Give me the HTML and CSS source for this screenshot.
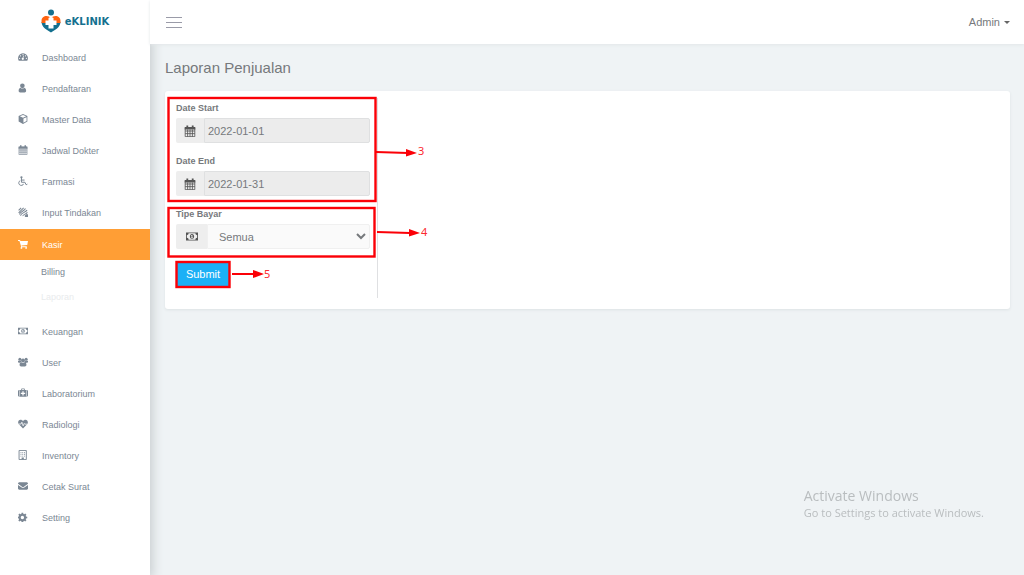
FILE: index.html
```html
<!DOCTYPE html>
<html lang="id">
<head>
    <meta charset="UTF-8">
    <meta name="viewport" content="width=device-width, initial-scale=1.0">
    <title>eKlinik - Laporan Penjualan</title>
    <link rel="stylesheet" href="styles.css">
</head>
<body>
    <aside class="sidebar">
        <a class="logo" href="#">
            <svg viewBox="0 0 40 48" width="20" height="24" aria-hidden="true">
                <circle cx="20" cy="7" r="6" fill="#14708f"/>
                <path d="M1 26 C2 38 12 41 20 47 C28 41 38 38 39 26 Z" fill="#14708f"/>
                <path d="M20 18 C14 11 1 13 1 24 L1 28 L20 28 Z M20 18 C26 11 39 13 39 24 L39 28 L20 28 Z" fill="#ff6410"/>
                <path d="M15 18 Q20 14 25 18 V23 H31 V32 H25 V39 H15 V32 H9 V23 H15 Z" fill="#fff"/>
            </svg>
            <span>eKLINIK</span>
        </a>
        <nav>
            <ul class="menu">
                <li><a href="#">
                    <svg class="icon" viewBox="0 0 16 16"><path fill-rule="evenodd" d="M8 2a8 8 0 0 0-6.8 12h13.6A8 8 0 0 0 8 2zM8 3.200a1 1 0 1 1 0 2 1 1 0 0 1 0-2zM4 5a1 1 0 1 1 0 2 1 1 0 0 1 0-2zM12 5a1 1 0 1 1 0 2 1 1 0 0 1 0-2zM2.600 9a1 1 0 1 1 0 2 1 1 0 0 1 0-2zM13.400 9a1 1 0 1 1 0 2 1 1 0 0 1 0-2zM9.300 6l-.7 3.500a1.700 1.700 0 1 1-1.200-.2L8.400 5.800z"/></svg>
                    Dashboard</a></li>
                <li><a href="#">
                    <svg class="icon" viewBox="0 0 16 16"><circle cx="7" cy="4.500" r="3.700"/><path d="M4 7.500C2 8 1 10 1 12.500 1 14 2 15 3.500 15h7c1.500 0 2.500-1 2.500-2.500 0-2.500-1-4.500-3-5a4.500 4.500 0 0 1-6 0z"/></svg>
                    Pendaftaran</a></li>
                <li><a href="#">
                    <svg class="icon" viewBox="0 0 16 16"><path fill-rule="evenodd" d="M8 0l7 3v9l-7 4-7-4V3zM8 1.500L3 3.700 8 6l5-2.300zM8.700 7.200v6.800l5-2.800V5z"/></svg>
                    Master Data</a></li>
                <li><a href="#">
                    <svg class="icon" viewBox="0 0 16 16"><use href="#calendar"/></svg>
                    Jadwal Dokter</a></li>
                <li><a href="#">
                    <svg class="icon" viewBox="0 0 16 16"><circle cx="5.500" cy="2" r="1.800"/><path d="M5.500 3v7h5.500l2 4 2-1M6 6.500h4.500M3.500 7.500a4 4 0 1 0 5.500 5" fill="none" stroke="currentColor" stroke-width="1.600"/></svg>
                    Farmasi</a></li>
                <li><a href="#">
                    <svg class="icon" viewBox="0 0 16 16"><path d="M1 5.500l4-4M1 9.500L9 1.500M2.500 12C2 8 10 7 12 2.500M4.500 14C3 10 12 9 14.500 5M8 14.500c-1-2.500 5-2.500 7-6M11 14.500l4-3M13 15h2.500v-2z" fill="none" stroke="currentColor" stroke-width="1.700"/></svg>
                    Input Tindakan</a></li>
                <li class="active"><a href="#">
                    <svg class="icon" viewBox="0 0 16 16"><path d="M0 1.500h3.300l.5 1.500H16l-1.200 6.500-9.300 1 .3 1H14V13H4.500l.4-1.500L2.300 3H0z"/><circle cx="5.500" cy="14.200" r="1.400"/><circle cx="13" cy="14.200" r="1.400"/></svg>
                    Kasir</a>
                    <ul class="submenu">
                        <li><a href="#">Billing</a></li>
                        <li><a class="current" href="#">Laporan</a></li>
                    </ul>
                </li>
                <li><a href="#">
                    <svg class="icon" viewBox="0 0 18 16"><use href="#money"/></svg>
                    Keuangan</a></li>
                <li><a href="#">
                    <svg class="icon" viewBox="0 0 16 16"><circle cx="3" cy="3.500" r="2.400"/><circle cx="13" cy="3.500" r="2.400"/><circle cx="8" cy="5.500" r="3.200"/><path d="M0 6h5v3H1.500C.5 9 0 8.500 0 7.500zM16 6h-5v3h3.500c1 0 1.500-.5 1.500-1.500zM5 8c-1.500.5-2.500 2-2.500 4.500 0 1.500 1 2.500 2.500 2.500h6c1.500 0 2.500-1 2.500-2.500 0-2.500-1-4-2.500-4.500a4 4 0 0 1-6 0z"/></svg>
                    User</a></li>
                <li><a href="#">
                    <svg class="icon" viewBox="0 0 16 16"><path fill-rule="evenodd" d="M5 3V1.500L6 .8h4l1 .7V3h3.500L16 4.500v8L14.500 14h-13L0 12.500v-8L1.500 3zM6.200 3h3.600V2H6.200zM7 5v2.500H4.500v2H7V12h2V9.500h2.500v-2H9V5zM2 3.500v10h.8v-10zM13.200 3.500v10h.8v-10z"/></svg>
                    Laboratorium</a></li>
                <li><a href="#">
                    <svg class="icon" viewBox="0 0 16 16"><path d="M8 15L1 8C-1 5 1 1 4 1c2 0 3 1 4 2 1-1 2-2 4-2 3 0 5 4 3 7z"/><path d="M1 8h4l1.200-3 2 6L10 7l.8 1.200H15" fill="none" stroke="#fff" stroke-width="1.200"/></svg>
                    Radiologi</a></li>
                <li><a href="#">
                    <svg class="icon" viewBox="0 0 16 16"><path d="M1.700.7h11.600v14.600H1.700z" fill="none" stroke="currentColor" stroke-width="1.500"/><path d="M4 3h1.500v1.500H4zM6.800 3h1.500v1.500H6.800zM9.600 3h1.500v1.500H9.600zM4 6h1.500v1.500H4zM6.800 6h1.500v1.500H6.800zM9.600 6h1.500v1.500H9.600zM4 9h1.500v1.500H4zM6.800 9h1.500v1.500H6.800zM9.600 9h1.500v1.500H9.600zM5.800 12h3.500v3H5.800z"/></svg>
                    Inventory</a></li>
                <li><a href="#">
                    <svg class="icon" viewBox="0 0 16 16"><path d="M1.500 2h13L16 3.500v1L9 9.500H7L0 4.500v-1zM0 6.200l6.500 4.600h3L16 6.200v6.300L14.500 14h-13L0 12.500z"/></svg>
                    Cetak Surat</a></li>
                <li><a href="#">
                    <svg class="icon" viewBox="0 0 16 16"><path fill-rule="evenodd" d="M5.700 1h2.600l.4 2 1.200.5 1.700-1.200 1.900 1.900-1.200 1.700.5 1.200 2 .4v2.600l-2 .4-.5 1.200 1.200 1.700-1.900 1.900-1.700-1.200-1.200.5-.4 2H5.700l-.4-2-1.200-.5-1.700 1.200L.5 13.400l1.200-1.700-.5-1.200-1.200-.4V7.500l1.200-.4.5-1.200L.5 4.200l1.900-1.900 1.700 1.200L5.300 3zM7 6a2.700 2.700 0 1 0 0 5.400A2.700 2.700 0 0 0 7 6z"/></svg>
                    Setting</a></li>
            </ul>
        </nav>
    </aside>

    <div class="page">
        <header class="topbar">
            <button class="toggle" type="button" aria-label="Menu"><i></i><i></i><i></i></button>
            <a class="account" href="#">Admin <span class="caret"></span></a>
        </header>

        <main class="content">
            <h1>Laporan Penjualan</h1>
            <section class="card">
                <form class="filter">
                    <div class="form-group">
                        <label for="dateStart">Date Start</label>
                        <div class="input-group">
                            <span class="addon"><svg viewBox="0 0 16 16" width="12" height="12"><use href="#calendar"/></svg></span>
                            <input type="text" id="dateStart" value="2022-01-01" readonly>
                        </div>
                    </div>
                    <div class="form-group">
                        <label for="dateEnd">Date End</label>
                        <div class="input-group">
                            <span class="addon"><svg viewBox="0 0 16 16" width="12" height="12"><use href="#calendar"/></svg></span>
                            <input type="text" id="dateEnd" value="2022-01-31" readonly>
                        </div>
                    </div>
                    <div class="form-group">
                        <label for="tipeBayar">Tipe Bayar</label>
                        <div class="input-group">
                            <span class="addon wide"><svg viewBox="0 0 18 16" width="12" height="11"><use href="#money"/></svg></span>
                            <select id="tipeBayar">
                                <option>Semua</option>
                            </select>
                        </div>
                    </div>
                    <button class="submit" type="button">Submit</button>
                </form>

                <!-- penanda langkah 3 - 5 -->
                <svg class="marks" width="270" height="205" viewBox="0 0 270 205">
                    <g fill="none" stroke="#fb0007" stroke-width="2.400">
                        <rect x="3.500" y="7" width="207" height="103"/>
                        <rect x="3.500" y="117" width="206" height="48.500"/>
                        <rect x="11.500" y="171" width="53" height="25"/>
                        <path d="M211 61L243 62M212 141L245 142M67 183H90" stroke-width="2"/>
                    </g>
                    <path d="M241 58L252 62L241 65.500zM244 138L255 142L244 145.500zM88 179L99 183L88 187z" fill="#fb0007"/>
                    <text x="253" y="64">3</text>
                    <text x="256" y="145">4</text>
                    <text x="99" y="187">5</text>
                </svg>
            </section>
        </main>
    </div>

    <div class="watermark">
        <strong>Activate Windows</strong>
        <span>Go to Settings to activate Windows.</span>
    </div>

    <!-- ikon yang dipakai lebih dari sekali -->
    <svg class="defs" width="0" height="0" aria-hidden="true">
        <defs>
            <g id="calendar">
                <path d="M1.600 3.500h12.800v12H1.600zM1.600 8h12.800M1.600 11.500h12.800M4.800 6v9.500M8 6v9.500M11.200 6v9.500" fill="none" stroke="currentColor" stroke-width="1.100"/>
                <path d="M1 2.500h14V6H1zM3.200.500h2.400v4H3.200zM10.400.500h2.400v4h-2.400z"/>
            </g>
            <g id="money">
                <path fill-rule="evenodd" d="M0 2h18v12H0zM4 3.300A2.700 2.700 0 0 1 1.300 6v4A2.700 2.700 0 0 1 4 12.700h10a2.700 2.700 0 0 1 2.700-2.700V6A2.700 2.700 0 0 1 14 3.300zM9 4.200c2 0 3.200 1.700 3.200 3.800S11 11.800 9 11.800 5.800 10.100 5.800 8 7 4.200 9 4.200zM8.500 5.700L7.200 6.800l.6.700.6-.4v2.400h-1v1h3.200v-1h-1V5.700z"/>
            </g>
        </defs>
    </svg>
</body>
</html>
```

FILE: styles.css
```css
* {
    box-sizing: border-box;
}

body {
    margin: 0;
    min-height: 100vh;
    display: flex;
    font-family: "Liberation Sans", Arial, sans-serif;
    font-size: 11px;
    color: #76797c;
    background-color: #eff3f5;
}

a {
    color: inherit;
    text-decoration: none;
}

ul {
    list-style: none;
    margin: 0;
    padding: 0;
}

svg {
    fill: currentColor;
}

/* sidebar */
.sidebar {
    flex: 0 0 150px;
    background-color: #fff;
    box-shadow: 0 0 10px 3px #c9cfd1;
}

.logo {
    display: flex;
    justify-content: center;
    align-items: center;
    gap: 4px;
    height: 42px;
    font: bold 10px "DejaVu Sans", sans-serif;
    color: #14708f;
}

.menu > li > a {
    display: flex;
    align-items: center;
    gap: 14px;
    height: 31px;
    padding-left: 18px;
    font-size: 9px;
    color: #7b8794;
}

.icon {
    width: 10px;
    height: 10px;
    margin-bottom: 2px;
}

.menu > .active {
    margin-top: 1px;
}

.menu > .active > a {
    color: #fff;
    background-color: #ff9e35;
}

.submenu {
    height: 56px;
}

.submenu a {
    display: block;
    padding-left: 41px;
    font-size: 9px;
    line-height: 25px;
    color: #7b8794;
}

.submenu .current {
    color: #e9ebed;
}

/* bagian kanan */
.page {
    flex: 1;
    min-width: 0;
}

.topbar {
    position: relative;
    display: flex;
    justify-content: space-between;
    align-items: center;
    height: 44px;
    padding: 0 14px 0 16px;
    background-color: #fff;
    box-shadow: 0 1px 3px #e2e6e8;
}

.toggle {
    display: flex;
    flex-direction: column;
    gap: 4px;
    width: 16px;
    padding: 0;
    border: 0;
    background: none;
    cursor: pointer;
}

.toggle i {
    height: 1px;
    background-color: #9a9ba8;
}

.account {
    display: flex;
    align-items: center;
    gap: 4px;
}

.caret {
    border: 3px solid transparent;
    border-top-color: #666;
    border-bottom: 0;
}

.content {
    padding: 14px 14px 14px 15px;
}

h1 {
    margin: 0 0 13px;
    font-size: 15px;
    font-weight: normal;
    line-height: 20px;
}

.card {
    position: relative;
    padding: 7px 11px 11px;
    border-radius: 3px;
    background-color: #fff;
    box-shadow: 0 1px 3px #dde2e4;
}

/* form filter */
.filter {
    width: 202px;
    height: 200px;
    padding: 4px 7px 0 0;
    border-right: 1px solid #dfe0e2;
}

.form-group {
    margin-bottom: 12px;
}

.form-group label {
    display: block;
    margin-bottom: 4px;
    font-size: 9px;
    font-weight: bold;
    line-height: 12px;
}

.input-group {
    display: flex;
    height: 25px;
}

.addon {
    flex: 0 0 28px;
    display: flex;
    justify-content: center;
    align-items: center;
    border-radius: 2px 0 0 2px;
    color: #555;
    background-color: #eee;
}

.addon.wide {
    flex-basis: 31px;
}

.input-group input,
.input-group select {
    flex: 1;
    min-width: 0;
    border: 1px solid #dfe0e1;
    border-radius: 0 2px 2px 0;
    font: inherit;
    color: inherit;
}

.input-group input {
    padding: 0 3px;
    background-color: #ececec;
}

.input-group select {
    padding: 0 0 0 7px;
    border-color: #f0f0f0;
    background-color: #fafafa;
}

.submit {
    display: block;
    width: 54px;
    height: 25px;
    padding: 0;
    border: 0;
    font: inherit;
    color: #fff;
    background-color: #1cb0f6;
    cursor: pointer;
}

.marks {
    position: absolute;
    top: 0;
    left: 0;
    pointer-events: none;
}

.marks text {
    font: 11px "Noto Sans", sans-serif;
    fill: #fb2a30;
}

.watermark {
    position: fixed;
    right: 40px;
    bottom: 54px;
    font: 11px/16px "Open Sans", sans-serif;
    color: #b9bdbf;
}

.watermark strong {
    display: block;
    font-size: 14px;
    font-weight: normal;
    line-height: 18px;
}

.defs {
    position: absolute;
}
```
